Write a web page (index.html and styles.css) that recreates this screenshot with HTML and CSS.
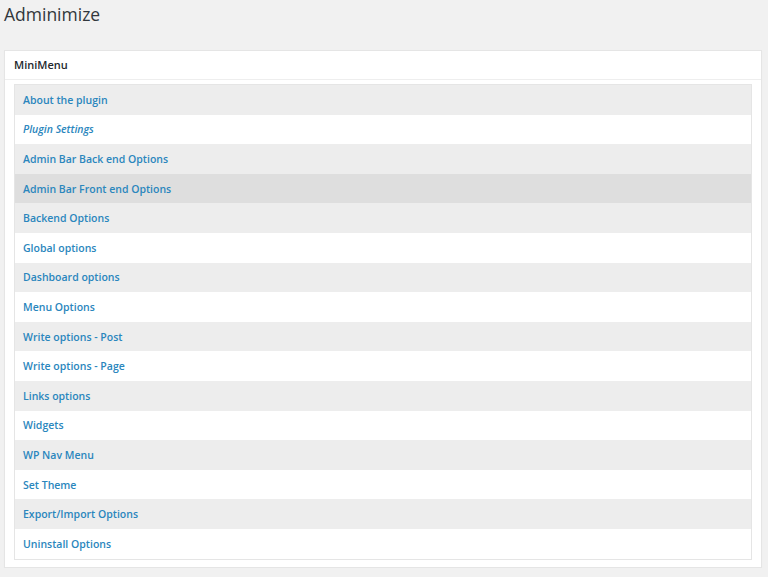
FILE: index.html
```html
<!DOCTYPE html>
<html>
<head>
<meta charset="utf-8">
<link rel="stylesheet" href="styles.css">
</head>
<body>
<h1 class="title">Adminimize</h1>
<div class="postbox">
  <h2 class="hndle">MiniMenu</h2>
  <div class="inside">
    <ul class="minimenu">
      <li class="row alt"><a href="#">About the plugin</a></li>
      <li class="row"><a href="#" class="em">Plugin Settings</a></li>
      <li class="row alt"><a href="#">Admin Bar Back end Options</a></li>
      <li class="row hover"><a href="#">Admin Bar Front end Options</a></li>
      <li class="row alt"><a href="#">Backend Options</a></li>
      <li class="row"><a href="#">Global options</a></li>
      <li class="row alt"><a href="#">Dashboard options</a></li>
      <li class="row"><a href="#">Menu Options</a></li>
      <li class="row alt"><a href="#">Write options - Post</a></li>
      <li class="row"><a href="#">Write options - Page</a></li>
      <li class="row alt"><a href="#">Links options</a></li>
      <li class="row"><a href="#">Widgets</a></li>
      <li class="row alt"><a href="#">WP Nav Menu</a></li>
      <li class="row"><a href="#">Set Theme</a></li>
      <li class="row alt"><a href="#">Export/Import Options</a></li>
      <li class="row"><a href="#">Uninstall Options</a></li>
    </ul>
  </div>
</div>
</body>
</html>
```
FILE: styles.css
```css
html, body {
  margin: 0;
  padding: 0;
}
body {
  background: #f1f1f1;
  font-family: "Open Sans", "Noto Sans", sans-serif;
  color: #23282d;
  padding: 0 6px 0 4px;
}
.title {
  margin: 0;
  padding: 1px 0 0 0;
  font-size: 17.5px;
  font-weight: 400;
  line-height: 26px;
  color: #32373c;
  height: 49px;
}
.postbox {
  background: #fff;
  border: 1px solid #e5e5e5;
  box-shadow: 0 1px 1px rgba(0,0,0,0.04);
  height: 518px;
  box-sizing: border-box;
}
.hndle {
  margin: 0;
  font-size: 11px;
  font-weight: 600;
  line-height: 28px;
  padding: 0 9px;
  border-bottom: 1px solid #eeeeee;
}
.inside {
  padding: 4px 9px 0 9px;
}
.minimenu {
  list-style: none;
  margin: 0;
  padding: 0;
  border: 1px solid #e5e5e5;
}
.row {
  height: 29.6px;
  display: flex;
  align-items: center;
  padding-left: 8px;
  background: #fff;
}
.row.alt {
  background: #ededed;
}
.row.hover {
  background: #dedede;
}
.row a {
  color: #2a86bd;
  text-decoration: none;
  font-size: 10.5px;
  font-weight: 600;
}
.row a.em {
  font-style: italic;
}
```
